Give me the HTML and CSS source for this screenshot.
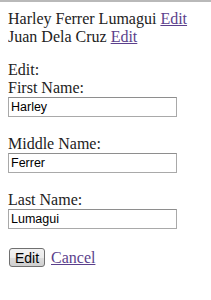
FILE: index.html
```html
<!DOCTYPE html>
<html>
  <head>
    <meta charset="UTF-8" />
    <title>Names</title>
    <link rel="stylesheet" href="styles.css">
  </head>
  <body>
    <div class="people">
      <div class="person">Harley Ferrer Lumagui <a href="#">Edit</a></div>
      <div class="person">Juan Dela Cruz <a href="#">Edit</a></div>
    </div>

    <form class="edit-form">
      <div class="form-title">Edit:</div>
      <div class="field">
        <label for="firstName">First Name:</label>
        <input type="text" id="firstName" class="text-input" value="Harley" />
      </div>
      <div class="field">
        <label for="middleName">Middle Name:</label>
        <input type="text" id="middleName" class="text-input" value="Ferrer" />
      </div>
      <div class="field">
        <label for="lastName">Last Name:</label>
        <input type="text" id="lastName" class="text-input" value="Lumagui" />
      </div>
      <div class="actions">
        <button type="button" class="button">Edit</button>
        <a href="#">Cancel</a>
      </div>
    </form>
  </body>
</html>
```

FILE: styles.css
```css
html {
  border-top: 2px solid #b9b9b9;
  background-color: white;
}

body {
  margin: 8px;
  font-family: "Liberation Serif", "Times New Roman", serif;
  font-size: 16px;
  line-height: 18px;
  color: #222;
}

a {
  color: #5b3f8c;
}

.people {
  margin-bottom: 15px;
}

.edit-form {
  display: flex;
  flex-direction: column;
}

.field {
  display: flex;
  flex-direction: column;
  align-items: flex-start;
  margin-bottom: 18px;
}

.text-input {
  width: 169px;
  height: 20px;
  box-sizing: border-box;
  margin: 0;
  padding: 1px 2px;
  border: 1px solid #a9a9a9;
  border-top-color: #8e8e8e;
  font-family: "Liberation Sans", Arial, sans-serif;
  font-size: 12.5px;
  color: #000;
  background: white;
}

.actions {
  display: flex;
  align-items: center;
  gap: 6px;
  margin-top: 1px;
}

.button {
  width: 36px;
  height: 19px;
  margin-left: 1px;
  padding: 0;
  border: 1px solid #707070;
  border-radius: 3px;
  background: linear-gradient(#f2f2f2, #ebebeb 50%, #dddddd 51%, #cfcfcf);
  font-family: "Liberation Sans", Arial, sans-serif;
  font-size: 14px;
  color: #000;
}
```
